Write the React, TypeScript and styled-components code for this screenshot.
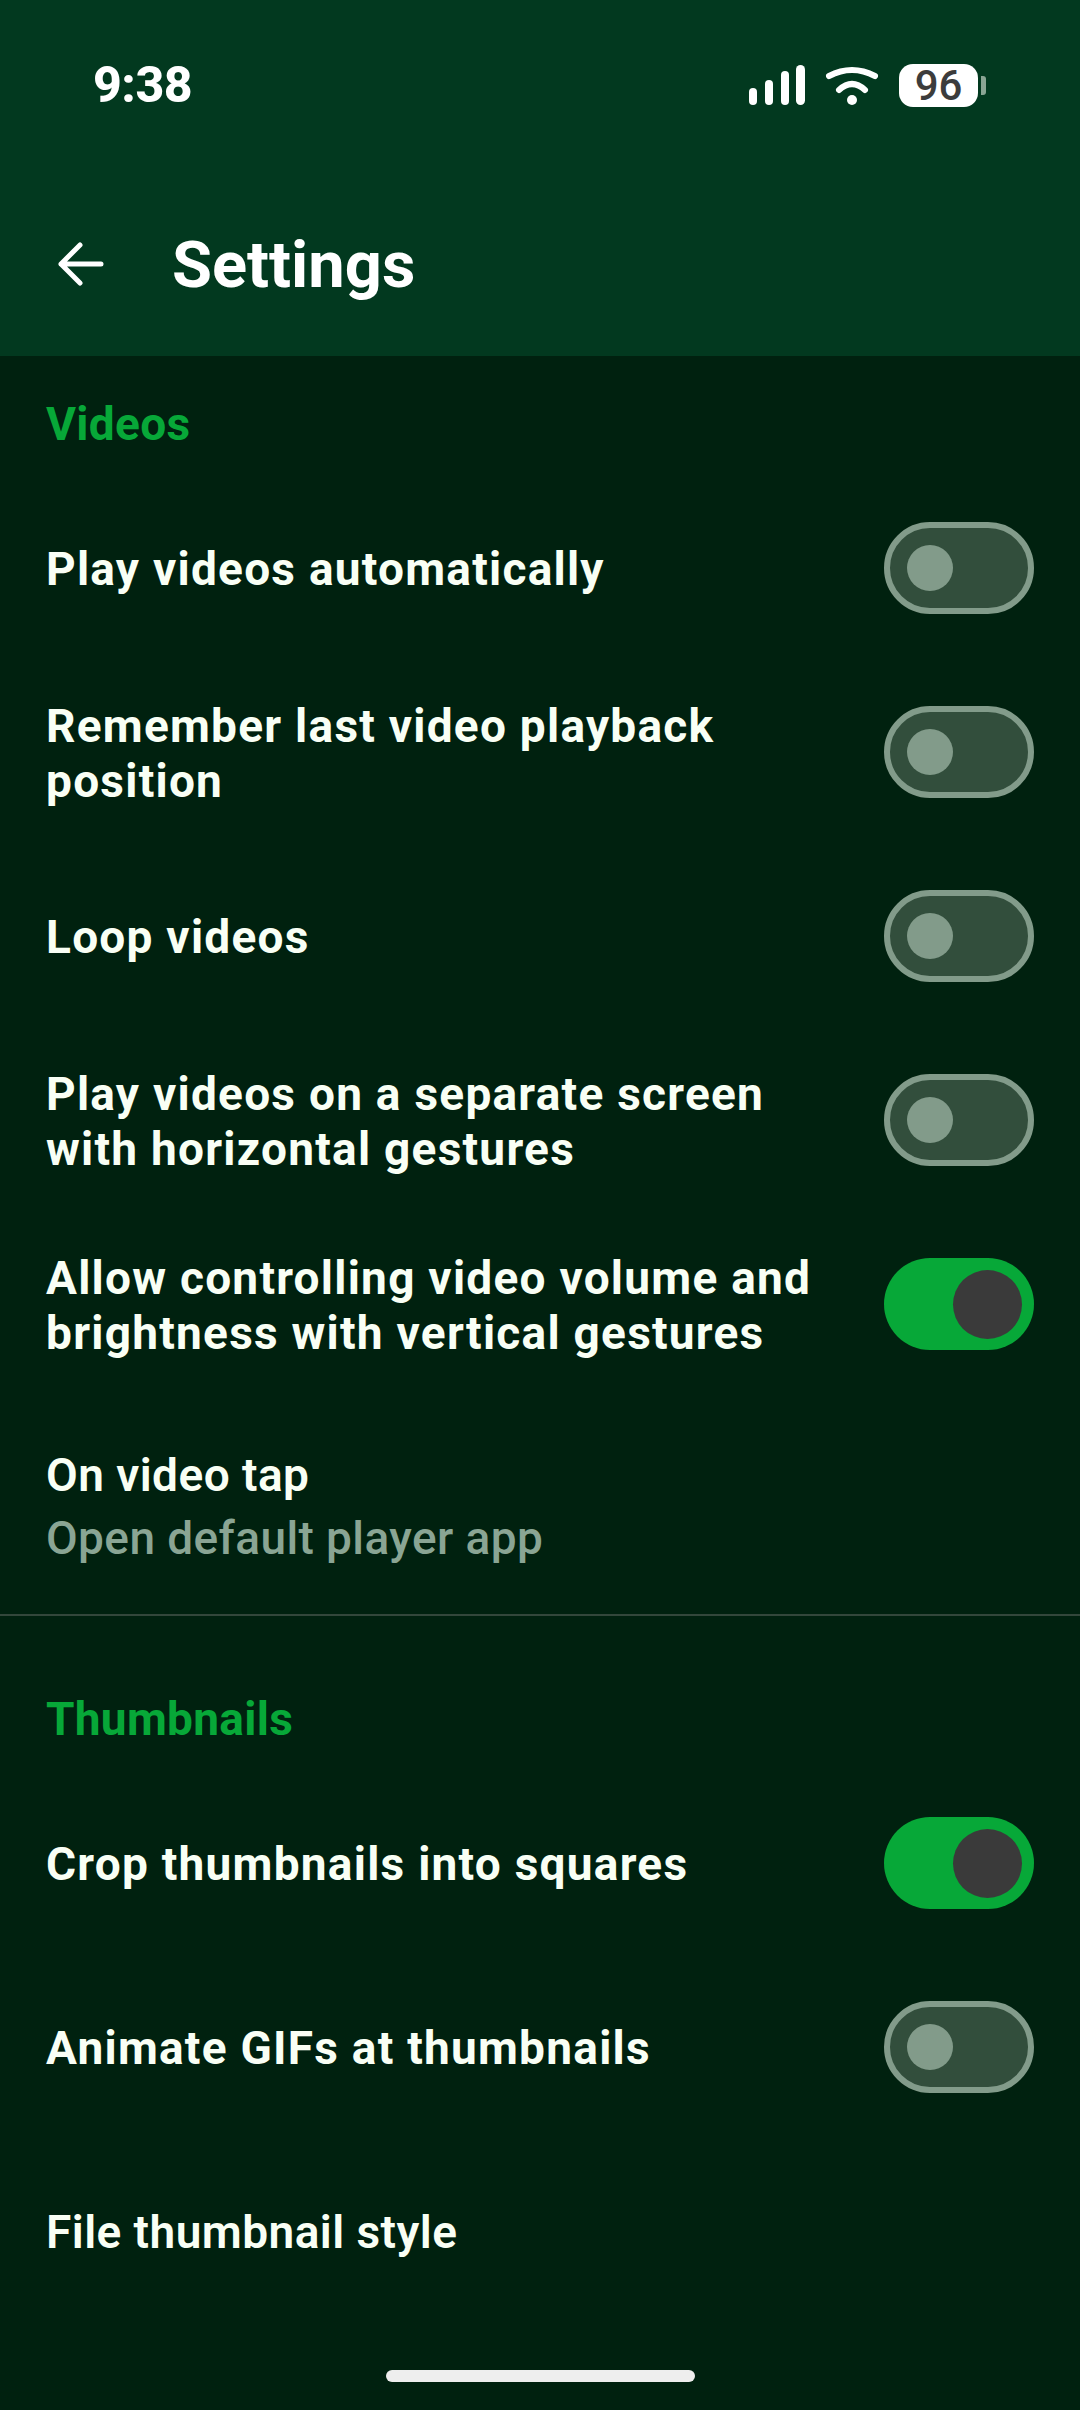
import React from 'react';
import styled, { createGlobalStyle } from 'styled-components';

const GlobalStyle = createGlobalStyle`
  html, body {
    margin: 0;
    padding: 0;
    background: #00210f;
  }
  * {
    box-sizing: border-box;
  }
`;

const Page = styled.div`
  width: 1080px;
  height: 2410px;
  overflow: hidden;
  display: flex;
  flex-direction: column;
  position: relative;
  background: #00210f;
  color: #f9fff5;
  font-family: Roboto, "Liberation Sans", sans-serif;
`;

const Header = styled.header`
  height: 356px;
  flex-shrink: 0;
  display: flex;
  flex-direction: column;
  background: #02391f;
`;

const StatusBar = styled.div`
  height: 216px;
  padding: 57px 94px 0 93px;
  display: flex;
  align-items: flex-start;
  justify-content: space-between;
  color: #ffffff;
`;

const Clock = styled.span`
  font-size: 50px;
  line-height: 56px;
  font-weight: 800;
  letter-spacing: -0.5px;
`;

const StatusIcons = styled.div`
  display: flex;
  align-items: center;
  height: 52px;
  margin-top: 2px;
`;

const WifiIcon = styled.svg`
  margin-left: 20px;
`;

const Battery = styled.div`
  position: relative;
  width: 79px;
  height: 43px;
  margin-left: 20px;
  margin-right: 8px;
  border-radius: 14px;
  background: #ffffff;
  color: #3c3c3c;
  font-size: 42px;
  line-height: 44px;
  font-weight: 500;
  text-align: center;

  &::after {
    content: '';
    position: absolute;
    left: 82px;
    top: 12px;
    width: 5px;
    height: 19px;
    border-radius: 0 3px 3px 0;
    background: #8aa594;
  }
`;

const Toolbar = styled.div`
  display: flex;
  align-items: center;
  height: 92px;
  padding-left: 55px;
  margin-top: 3px;
`;

const BackIcon = styled.svg`
  width: 50px;
  height: 50px;
  margin-right: 67px;
  flex-shrink: 0;
`;

const Title = styled.h1`
  margin: 0;
  font-size: 65px;
  line-height: 72px;
  font-weight: 700;
  color: #ffffff;
`;

const Section = styled.section<{ $top: number }>`
  padding-top: ${(props) => props.$top}px;
`;

const SectionTitle = styled.h2`
  height: 80px;
  margin: 0;
  padding: 0 46px;
  font-size: 46px;
  line-height: 56px;
  font-weight: 700;
  letter-spacing: 0.3px;
  color: #07a838;
`;

const Row = styled.div<{ $tall: boolean }>`
  min-height: ${(props) => (props.$tall ? 218 : 184)}px;
  padding: 0 46px;
  display: flex;
  align-items: center;
  justify-content: space-between;
`;

const RowText = styled.div`
  display: flex;
  flex-direction: column;
  gap: 8px;
  padding-top: 3px;
`;

const Label = styled.div<{ $wide: boolean }>`
  font-size: 46px;
  line-height: 55px;
  font-weight: ${(props) => (props.$wide ? 700 : 600)};
  letter-spacing: ${(props) => (props.$wide ? 1.25 : 0.45)}px;
  white-space: pre-line;
`;

const Hint = styled.div`
  font-size: 46px;
  line-height: 55px;
  font-weight: 500;
  letter-spacing: 0.4px;
  color: #8aa594;
`;

const Track = styled.div<{ $on: boolean }>`
  width: 150px;
  height: 92px;
  flex-shrink: 0;
  display: flex;
  align-items: center;
  justify-content: ${(props) => (props.$on ? 'flex-end' : 'flex-start')};
  padding: ${(props) => (props.$on ? '0 12px' : '0 17px')};
  border-radius: 46px;
  border: ${(props) => (props.$on ? 'none' : '6px solid #829b8a')};
  background: ${(props) => (props.$on ? '#07a838' : '#324e3c')};
`;

const Thumb = styled.div<{ $on: boolean }>`
  width: ${(props) => (props.$on ? 69 : 46)}px;
  height: ${(props) => (props.$on ? 69 : 46)}px;
  border-radius: 50%;
  background: ${(props) => (props.$on ? '#3a3a3a' : '#829b8a')};
`;

const Divider = styled.hr`
  margin: 0;
  border: none;
  height: 2px;
  background: #33473b;
`;

const HomeBar = styled.div`
  position: absolute;
  left: 386px;
  bottom: 28px;
  width: 309px;
  height: 12px;
  border-radius: 6px;
  background: #eeeeee;
`;

const Toggle = ({ on }: { on: boolean }) => (
  <Track $on={on}>
    <Thumb $on={on} />
  </Track>
);

interface Item {
  label: string;
  hint?: string;
  on?: boolean;
}

const videoItems: Item[] = [
  { label: 'Play videos automatically', on: false },
  { label: 'Remember last video playback\nposition', on: false },
  { label: 'Loop videos', on: false },
  { label: 'Play videos on a separate screen\nwith horizontal gestures', on: false },
  { label: 'Allow controlling video volume and\nbrightness with vertical gestures', on: true },
  { label: 'On video tap', hint: 'Open default player app' },
];

const thumbnailItems: Item[] = [
  { label: 'Crop thumbnails into squares', on: true },
  { label: 'Animate GIFs at thumbnails', on: false },
  { label: 'File thumbnail style' },
];

const renderRow = (item: Item) => (
  <Row key={item.label} $tall={Boolean(item.hint)}>
    <RowText>
      <Label $wide={item.on !== undefined}>{item.label}</Label>
      {item.hint && <Hint>{item.hint}</Hint>}
    </RowText>
    {item.on !== undefined && <Toggle on={item.on} />}
  </Row>
);

const App: React.FC = () => (
  <Page>
    <GlobalStyle />
    <Header>
      <StatusBar>
        <Clock>9:38</Clock>
        <StatusIcons>
          <svg width="56" height="40" viewBox="0 0 56 40" fill="#ffffff">
            <rect x="0" y="23" width="8" height="17" rx="4" />
            <rect x="16" y="15" width="8" height="25" rx="4" />
            <rect x="32" y="6" width="8" height="34" rx="4" />
            <rect x="47" y="0" width="9" height="40" rx="4.5" />
          </svg>
          <WifiIcon
            width="54"
            height="40"
            viewBox="0 0 54 40"
            fill="none"
            stroke="#ffffff"
            strokeWidth="6"
            strokeLinecap="round"
          >
            <path d="M4 11Q27 -1 50 11" />
            <path d="M14 25Q27 13 40 25" />
            <circle cx="27" cy="35" r="5" fill="#ffffff" stroke="none" />
          </WifiIcon>
          <Battery>96</Battery>
        </StatusIcons>
      </StatusBar>
      <Toolbar>
        <BackIcon
          viewBox="0 0 50 50"
          fill="none"
          stroke="#ffffff"
          strokeWidth="5"
          strokeLinecap="round"
          strokeLinejoin="round"
        >
          <path d="M46 24H6M25 5L6 24L25 43" />
        </BackIcon>
        <Title>Settings</Title>
      </Toolbar>
    </Header>
    <Section $top={40}>
      <SectionTitle>Videos</SectionTitle>
      {videoItems.map(renderRow)}
    </Section>
    <Divider />
    <Section $top={75}>
      <SectionTitle>Thumbnails</SectionTitle>
      {thumbnailItems.map(renderRow)}
    </Section>
    <HomeBar />
  </Page>
);

export default App;
